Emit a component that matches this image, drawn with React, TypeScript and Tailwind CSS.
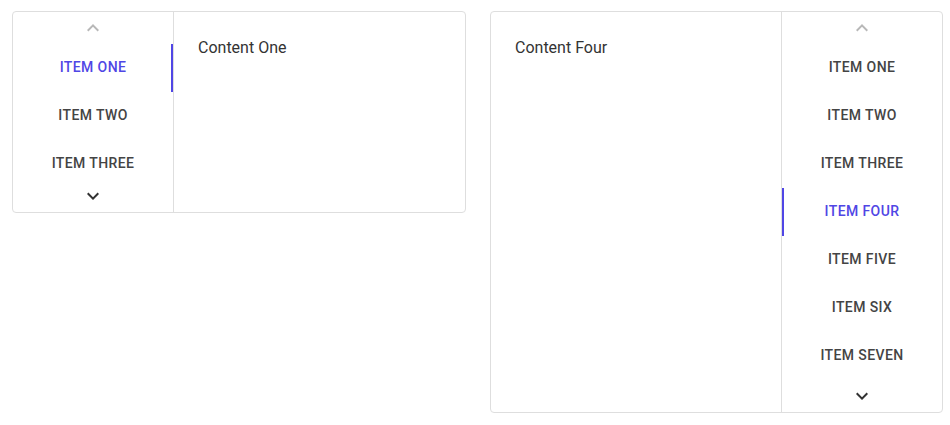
import React from 'react';

const items = ['Item One', 'Item Two', 'Item Three', 'Item Four', 'Item Five', 'Item Six', 'Item Seven'];

const ArrowUp = ({ className }: { className?: string }) => (
  <svg viewBox="0 0 24 24" className={className} fill="currentColor">
    <path d="M7.41 15.41 12 10.83l4.59 4.58L18 14l-6-6-6 6z" />
  </svg>
);

const ArrowDown = ({ className }: { className?: string }) => (
  <svg viewBox="0 0 24 24" className={className} fill="currentColor">
    <path d="M7.41 8.59 12 13.17l4.59-4.58L18 10l-6 6-6-6z" />
  </svg>
);

type TabsProps = {
  active: number;
  side: 'left' | 'right';
  count: number;
  listHeight: string;
};

const VerticalTabs = ({ active, side, count, listHeight }: TabsProps) => {
  const border = side === 'left' ? 'border-r' : 'border-l';
  return (
    <div className={`w-[161px] shrink-0 flex flex-col border-[#dedede] ${border}`}>
      <button className="h-8 flex items-center justify-center text-[#b8b8b8]">
        <ArrowUp className="w-6 h-6" />
      </button>
      <div className={`overflow-hidden ${listHeight}`}>
        {items.slice(0, count).map((label, i) => {
          const on = i === active;
          return (
            <div
              key={label}
              className={`relative h-12 pb-0.5 flex items-center justify-center text-sm font-medium uppercase tracking-[0.02857em] ${
                on ? 'text-[#5046e5]' : 'text-[#444444]'
              }`}
            >
              {label}
              {on && (
                <span
                  className={`absolute top-0 bottom-0 w-[2px] bg-[#5046e5] ${
                    side === 'left' ? 'right-0' : 'left-0'
                  }`}
                />
              )}
            </div>
          );
        })}
      </div>
      <button className="h-8 flex items-center justify-center text-[#333333]">
        <ArrowDown className="w-6 h-6" />
      </button>
    </div>
  );
};

export default function App() {
  return (
    <div
      className="flex items-start gap-6 pl-3 pt-[11px] bg-white min-h-[425px]"
      style={{ fontFamily: 'Roboto, "Liberation Sans", sans-serif' }}
    >
      <div className="w-[454px] flex border border-[#dedede] rounded-[4px] overflow-hidden">
        <VerticalTabs active={0} side="left" count={3} listHeight="h-[136px]" />
        <div className="flex-1 p-6 text-base text-[#333333]">Content One</div>
      </div>

      <div className="w-[453px] flex border border-[#dedede] rounded-[4px] overflow-hidden">
        <div className="flex-1 p-6 text-base text-[#333333]">Content Four</div>
        <VerticalTabs active={3} side="right" count={7} listHeight="h-[336px]" />
      </div>
    </div>
  );
}
